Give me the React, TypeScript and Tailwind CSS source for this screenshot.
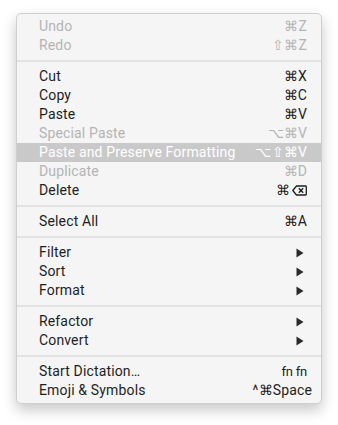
import React from "react";

type Item =
  | { sep: true }
  | {
      sep?: false;
      label: string;
      shortcut?: React.ReactNode;
      disabled?: boolean;
      active?: boolean;
      submenu?: boolean;
    };

const BackspaceIcon = () => (
  <svg width="15" height="11" viewBox="0 0 15 11" className="inline-block ml-[2px]">
    <path
      d="M4.5 1 H13.5 A0.8 0.8 0 0 1 14.3 1.8 V9.2 A0.8 0.8 0 0 1 13.5 10 H4.5 L0.8 5.5 Z"
      fill="none"
      stroke="currentColor"
      strokeWidth="1.3"
      strokeLinejoin="round"
    />
    <path d="M6.8 3.3 L11.2 7.7 M11.2 3.3 L6.8 7.7" stroke="currentColor" strokeWidth="1.4" />
  </svg>
);

const items: Item[] = [
  { label: "Undo", shortcut: "⌘Z", disabled: true },
  { label: "Redo", shortcut: "⇧⌘Z", disabled: true },
  { sep: true },
  { label: "Cut", shortcut: "⌘X" },
  { label: "Copy", shortcut: "⌘C" },
  { label: "Paste", shortcut: "⌘V" },
  { label: "Special Paste", shortcut: "⌥⌘V", disabled: true },
  { label: "Paste and Preserve Formatting", shortcut: "⌥⇧⌘V", active: true },
  { label: "Duplicate", shortcut: "⌘D", disabled: true },
  {
    label: "Delete",
    shortcut: (
      <span className="flex items-center">
        ⌘<BackspaceIcon />
      </span>
    ),
  },
  { sep: true },
  { label: "Select All", shortcut: "⌘A" },
  { sep: true },
  { label: "Filter", submenu: true },
  { label: "Sort", submenu: true },
  { label: "Format", submenu: true },
  { sep: true },
  { label: "Refactor", submenu: true },
  { label: "Convert", submenu: true },
  { sep: true },
  { label: "Start Dictation…", shortcut: <span className="text-[13px] tracking-[-0.2px]">fn fn</span> },
  { label: "Emoji & Symbols", shortcut: <span className="-mr-[5px]">^⌘Space</span> },
];

export default function App() {
  return (
    <div
      className="w-[338px] h-[425px] bg-white pt-[13px] pl-[16px]"
      style={{ fontFamily: "Roboto, 'Liberation Sans', sans-serif" }}
    >
      <div className="w-[306px] rounded-[5px] bg-[#f5f5f5] border border-[#cfcfcf] shadow-[0_6px_14px_rgba(0,0,0,0.22)] py-[3px] text-[14px] leading-[19px] tracking-[0.15px]">
        {items.map((it, i) =>
          it.sep ? (
            <div key={i} className="h-[12px] flex items-center">
              <div className="h-[2px] w-full bg-[#e2e2e2]" />
            </div>
          ) : (
            <div
              key={i}
              className={`h-[19px] flex items-center justify-between pl-[22px] pr-[14px] ${
                it.active
                  ? "bg-[#c9c9c9] text-white"
                  : it.disabled
                  ? "text-[#b4b4b4]"
                  : "text-[#1e1e1e]"
              }`}
            >
              <span>{it.label}</span>
              {it.submenu ? (
                <svg width="8" height="10" viewBox="0 0 8 10" className="mr-[3px]">
                  <path d="M0.5 0.5 L7.5 5 L0.5 9.5 Z" fill="#2a2a2a" />
                </svg>
              ) : (
                <span className="flex items-center">{it.shortcut}</span>
              )}
            </div>
          )
        )}
      </div>
    </div>
  );
}
